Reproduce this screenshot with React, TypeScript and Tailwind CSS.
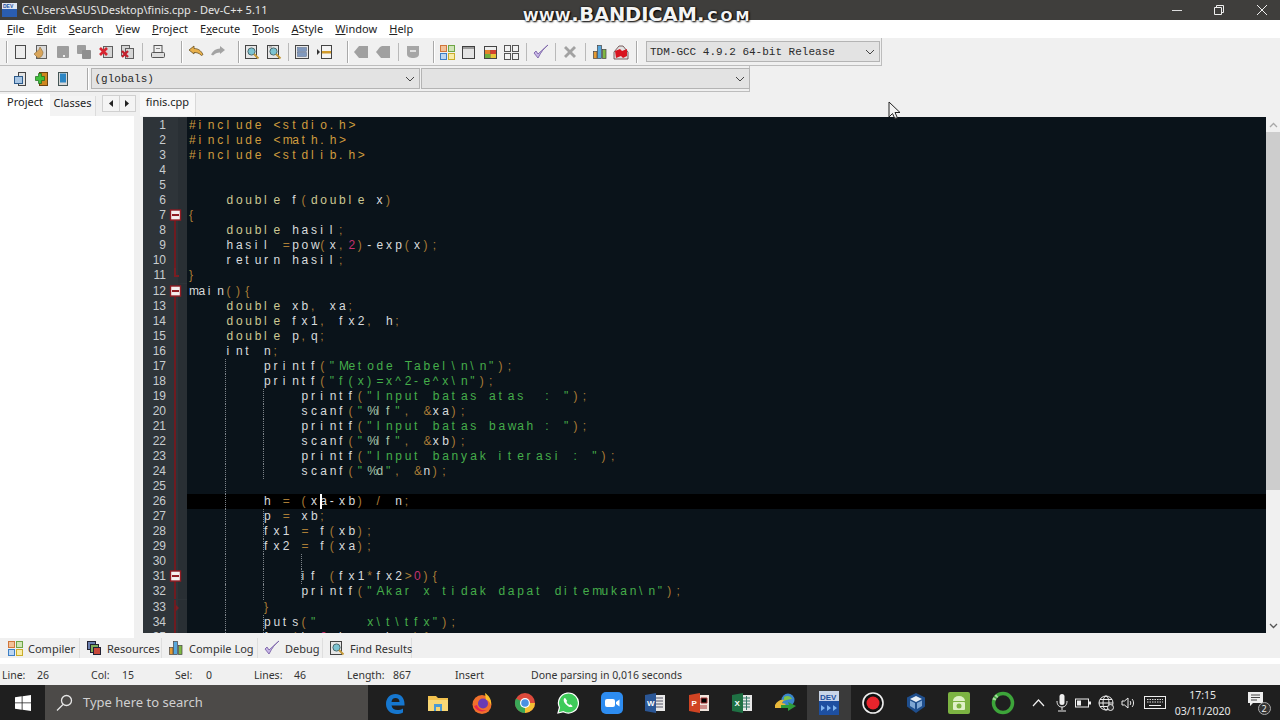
import React from "react";

const LINES: string[] = [
  "#include <stdio.h>",
  "#include <math.h>",
  "#include <stdlib.h>",
  "",
  "",
  "    double f(double x)",
  "{",
  "    double hasil;",
  "    hasil =pow(x,2)-exp(x);",
  "    return hasil;",
  "}",
  "main(){",
  "    double xb, xa;",
  "    double fx1, fx2, h;",
  "    double p,q;",
  "    int n;",
  '        printf("Metode Tabel\\n\\n");',
  '        printf("f(x)=x^2-e^x\\n");',
  '            printf("Input batas atas  : ");',
  '            scanf("%lf", &xa);',
  '            printf("Input batas bawah : ");',
  '            scanf("%lf", &xb);',
  '            printf("Input banyak iterasi : ");',
  '            scanf("%d", &n);',
  "",
  "        h = (xa-xb) / n;",
  "        p = xb;",
  "        fx1 = f(xb);",
  "        fx2 = f(xa);",
  "",
  "            if (fx1*fx2>0){",
  '            printf("Akar x tidak dapat ditemukan\\n");',
  "        }",
  '        puts("     x\\t\\tfx");',
  "        for(i=0;i<=n;i++){",
];

type Kind = "pre" | "kw" | "id" | "sym" | "str" | "fmt" | "num";
const COLOR: Record<Kind, string> = {
  pre: "text-[#d09c3e]",
  kw: "text-[#cdc892]",
  id: "text-[#d8dbdd]",
  sym: "text-[#a97c36]",
  str: "text-[#45ad4a]",
  fmt: "text-[#a9c6ad]",
  num: "text-[#c4316f]",
};

function tokens(line: string): [string, Kind][] {
  if (line.startsWith("#")) return [[line, "pre"]];
  const out: [string, Kind][] = [];
  const re = /("[^"]*")|([A-Za-z_][A-Za-z_0-9]*)|(\d+)|(\s+)|([^\s])/g;
  let m: RegExpExecArray | null;
  while ((m = re.exec(line))) {
    if (m[1]) {
      const parts = m[1].split(/(%l?[fd])/);
      parts.forEach((p) => p && out.push([p, /^%/.test(p) ? "fmt" : "str"]));
    } else if (m[2]) out.push([m[2], m[2] === "double" ? "kw" : "id"]);
    else if (m[3]) out.push([m[3], "num"]);
    else if (m[4]) out.push([m[4], "id"]);
    else out.push([m[5], m[5] === "-" ? "id" : "sym"]);
  }
  return out;
}

function Fold({ n }: { n: number }) {
  const isBox = n === 7 || n === 12 || n === 31;
  const inLine = (n > 7 && n < 11) || n > 12;
  return (
    <svg width="21" height="15.06" viewBox="0 0 21 15" className="shrink-0 block" preserveAspectRatio="none">
      <rect x="12" y="0" width="9" height="15" fill="#292f34" />
      {(inLine || n === 7 || n === 12) && <rect x="8" y={n === 7 || n === 12 ? 8 : 0} width="2" height={n === 7 || n === 12 ? 7 : 15} fill="#6e1b20" />}
      {n === 11 && <path d="M9 0V8H13" stroke="#7a1d22" strokeWidth="2" fill="none" />}
      {n === 33 && <path d="M10 5l3 3-3 3z" fill="#7a1d22" />}
      {isBox && (
        <>
          <rect x="4.5" y="2" width="10" height="10" fill="#f4efef" stroke="#8f1b22" strokeWidth="1.4" />
          <rect x="6" y="6" width="7" height="2" fill="#8f1b22" />
        </>
      )}
    </svg>
  );
}

const GUIDES: Record<number, number[]> = {};
for (let n = 17; n <= 35; n++) GUIDES[n] = [36];
for (let n = 19; n <= 24; n++) GUIDES[n] = [36, 74];
for (const n of [27, 28, 29, 30, 31, 32, 34, 35]) GUIDES[n] = [36, 74];
GUIDES[30] = [36, 74, 112];
GUIDES[31] = [36, 74, 112];

function CodeRow({ text, n }: { text: string; n: number }) {
  const active = n === 26;
  return (
    <div className="flex h-[15.06px] shrink-0">
      <div className="w-[23px] shrink-0 bg-[#2e3439] text-right text-[12px] leading-[15px] text-[#c8cccf]">{n}</div>
      <div className="w-[21px] shrink-0 bg-[#2e3439]"><Fold n={n} /></div>
      <div className={`relative flex-1 pl-[2px] flex text-[12px] leading-[15px] ${active ? "bg-black" : ""}`}>
        {(GUIDES[n] || []).map((g) => (
          <span key={g} style={{ left: g + 2 }} className="absolute top-0 bottom-0 w-px border-l border-dotted border-[#7c8288]" />
        ))}
        {tokens(text).map(([t, k], i) => (
          <React.Fragment key={i}>
            {t.split("").map((c, j) => (
              <span key={j} className={`inline-block w-[9.38px] shrink-0 whitespace-pre ${COLOR[k]}`}>{c}</span>
            ))}
          </React.Fragment>
        ))}
        {active && <span className="absolute left-[133px] top-0 h-[15px] w-[2px] bg-white" />}
      </div>
    </div>
  );
}

const S = ({ children, w = 16, h = 16, vb }: { children: React.ReactNode; w?: number; h?: number; vb?: string }) => (
  <svg width={w} height={h} viewBox={vb || `0 0 ${w} ${h}`} className="block shrink-0">{children}</svg>
);

const doc = <rect x="3.5" y="1.5" width="10" height="13" fill="#d9d9d9" stroke="#5f5f5f" />;
const mag = (
  <>
    <rect x="1.5" y="1.5" width="11" height="13" fill="#e6e6e6" stroke="#444" />
    <circle cx="7.5" cy="7.5" r="3.6" fill="#7cc4d2" stroke="#4b6a70" />
    <path d="M10 10l4.5 4.5" stroke="#c59a3a" strokeWidth="2" />
  </>
);
const Icons: Record<string, React.ReactNode> = {
  new: <S><rect x="3.5" y="1.5" width="10" height="13" fill="#ececec" stroke="#4a4a4a" /></S>,
  open: <S>{doc}<path d="M1 10c3-3 5-3 6-7l3 5c0 3-2 6-5 6z" fill="#d9a55a" stroke="#8a6a35" strokeWidth=".6" /></S>,
  save: <S><rect x="2" y="2" width="12" height="12" rx="1" fill="#9d9d9d" /><rect x="8" y="11" width="2" height="2" fill="#eee" /></S>,
  saveall: <S><rect x="1" y="1" width="9" height="9" rx="1" fill="#9d9d9d" /><rect x="6" y="6" width="9" height="9" rx="1" fill="#8f8f8f" /></S>,
  close: <S><rect x="5.5" y="2.5" width="9" height="11" fill="#d5d5d5" stroke="#5f5f5f" /><path d="M2 4l7 7M9 4l-7 7" stroke="#d8242f" strokeWidth="2.6" /></S>,
  closeall: <S><rect x="2.5" y="1.5" width="8" height="10" fill="#d5d5d5" stroke="#5f5f5f" /><rect x="6.5" y="4.5" width="8" height="10" fill="#d5d5d5" stroke="#5f5f5f" /><path d="M3 7l6 6M9 7l-6 6" stroke="#c4202d" strokeWidth="2.4" /></S>,
  print: <S><rect x="4" y="1.5" width="8" height="7" fill="#eee" stroke="#555" /><rect x="1.5" y="8.5" width="13" height="5" rx="1" fill="#ddd" stroke="#555" /><path d="M6 4.5h4" stroke="#888" /></S>,
  undo: <S><path d="M1 6l5-4v2.5c4 0 7 2 9 6l-1.5 1C11 9 9 8.5 6 8.5V10z" fill="#e9b04a" stroke="#6a5020" strokeWidth=".8" /></S>,
  redo: <S><path d="M15 6l-5-4v2.5c-4 0-7 2-9 6l2 1c2-2 4-3 7-3V10z" fill="#a3a3a3" /></S>,
  find: <S>{mag}</S>,
  findn: <S>{mag}<path d="M3 3h3" stroke="#888" /></S>,
  list: <S><rect x="1.5" y="1.5" width="13" height="13" fill="#e8e8e8" stroke="#444" /><rect x="3.5" y="3.5" width="9" height="4" fill="#7f98bd" stroke="#56688a" strokeWidth=".5" /><rect x="3.5" y="8.5" width="9" height="4" fill="#7f98bd" stroke="#56688a" strokeWidth=".5" /></S>,
  mark: <S><rect x="5.5" y="1.5" width="10" height="13" fill="#f4f4f4" stroke="#444" /><rect x="6" y="7" width="9" height="2.5" fill="#d09a2c" /><path d="M1 5l3 3-3 3z" fill="#333" /></S>,
  il: <S><path d="M1 8l5-6h9v12H6z" fill="#a0a0a0" /></S>,
  ir: <S><path d="M1 8l4-5 2-1h8v12H6z" fill="#a0a0a0" /></S>,
  sh: <S><path d="M2 2h12v8c0 3-3 4-6 4s-6-1-6-4z" fill="#a6a6a6" /><path d="M5 7h6" stroke="#eee" strokeWidth="1.6" /></S>,
  grid: <S><rect x="1.5" y="1.5" width="6" height="6" fill="#f2c198" stroke="#d0763a" /><rect x="9.5" y="1.5" width="6" height="6" fill="#cfe4b7" stroke="#6da544" /><rect x="1.5" y="9.5" width="6" height="6" fill="#bcd6f2" stroke="#3d7fc4" /><rect x="9.5" y="9.5" width="6" height="6" fill="#f9eca8" stroke="#c9ad2b" /></S>,
  win: <S><rect x="2.5" y="2.5" width="12" height="12" fill="#e3e3e3" stroke="#3e3e3e" /><rect x="3" y="3" width="11" height="2" fill="#9a9a9a" /></S>,
  block: <S><rect x="2" y="2" width="13" height="13" fill="#444" /><rect x="3" y="3" width="11" height="3" fill="#eee" /><rect x="3" y="6" width="5.5" height="4" fill="#e3842a" /><rect x="8.5" y="6" width="5.5" height="4" fill="#d4402f" /><rect x="3" y="10" width="5.5" height="4" fill="#6faf3d" /><rect x="8.5" y="10" width="5.5" height="4" fill="#e8c43a" /></S>,
  gray: <S><rect x="1.5" y="1.5" width="6" height="6" fill="#f2f2f2" stroke="#555" /><rect x="9.5" y="1.5" width="6" height="6" fill="#f2f2f2" stroke="#555" /><rect x="1.5" y="9.5" width="6" height="6" fill="#f2f2f2" stroke="#555" /><rect x="9.5" y="9.5" width="6" height="6" fill="#f2f2f2" stroke="#555" /></S>,
  check: <S><path d="M1 9l4 5C8 8 11 4 15 1L5 10 3 7z" fill="#c7b6e6" stroke="#7a62a8" strokeWidth=".9" /></S>,
  x: <S><path d="M2 4l2-2 4 4 4-4 2 2-4 4 4 4-2 2-4-4-4 4-2-2 4-4z" fill="#a2a2a2" /></S>,
  bars: <S><rect x="1.5" y="7.5" width="3.5" height="7" fill="#e59a32" stroke="#444" strokeWidth=".7" /><rect x="5.5" y="1.5" width="4" height="13" fill="#56a6dc" stroke="#444" strokeWidth=".7" /><rect x="10.5" y="5.5" width="3.5" height="9" fill="#7fb843" stroke="#444" strokeWidth=".7" /></S>,
  prof: <S><path d="M1 8l5-6h4l5 6v7H1z" fill="#e2e2e2" stroke="#5a3a3a" strokeWidth=".8" /><path d="M2 7l5-2 2 2 5-2v7l-4 2-2-2-5 2z" fill="#d8141f" /></S>,
  cls: <S><rect x="6.5" y="1.5" width="7" height="13" fill="#e4e4e4" stroke="#444" /><rect x="2.5" y="5.5" width="8" height="7" fill="#a9c6e4" stroke="#2d5b8c" /></S>,
  add: <S><rect x="6.5" y="1.5" width="8" height="13" fill="#d0871f" stroke="#6a4410" /><path d="M5.5 2.5v3h-3v4h3v3h3v-3h3v-4h-3v-3z" fill="#3fc03a" stroke="#1d6a1a" strokeWidth=".7" /></S>,
  blue: <S><rect x="3.5" y="1.5" width="9" height="13" fill="#d8d8d8" stroke="#455" /><rect x="5" y="2.5" width="6" height="9" fill="#2c86c4" /></S>,
};

const Btn = ({ i }: { i: string }) => <div className="w-[21.5px] h-[18px] shrink-0 flex items-center justify-center">{Icons[i]}</div>;
const Sep = ({ w = "w-[9px]" }: { w?: string }) => <div className={`${w} shrink-0 flex justify-center`}><div className="w-px h-[18px] bg-[#b9b9b9]" /></div>;
const Handle = ({ w }: { w: string }) => <div className={`${w} shrink-0 h-[22px] flex justify-center`}><div className="w-[2px] h-[22px] border-l border-[#a9a9a9] bg-white" /></div>;
const Chev = () => <svg width="10" height="6" viewBox="0 0 10 6" className="block shrink-0"><path d="M1 1l4 4 4-4" stroke="#444" fill="none" /></svg>;

const Combo = ({ w, text }: { w: string; text?: string }) => (
  <div className={`${w} h-[21px] shrink-0 bg-[#e3e3e3] border border-[#b4b4b4] flex items-center justify-between pl-[3px] pr-[4px] font-['Liberation_Mono'] text-[11px] text-[#2b2b2b]`}>
    <span className="whitespace-pre pt-[2px]">{text}</span>
    <Chev />
  </div>
);

const BottomTab = ({ icon, label, w }: { icon: React.ReactNode; label: string; w: string }) => (
  <div className={`${w} h-full shrink-0 flex items-center gap-[5px] pl-[6px] border-r border-[#dedede]`}>
    {icon}
    <span className="text-[#333] whitespace-nowrap pt-[2px]">{label}</span>
  </div>
);

const Stat = ({ a, b, w, lw }: { a: string; b: string; w: string; lw: string }) => (
  <div className={`${w} shrink-0 flex`}>
    <span className={`${lw} shrink-0`}>{a}</span>
    <span>{b}</span>
  </div>
);

const T = ({ children }: { children: React.ReactNode }) => <div className="w-[43.45px] h-full shrink-0 flex items-center justify-center">{children}</div>;

const Tb: Record<string, React.ReactNode> = {
  edge: (
    <S w={22} h={22}>
      <path d="M2 12C2 6 6 2 11.500 2c5.500 0 9 4 9 10v1.500H7.500c.5 3 3 4.500 6 4.500 2 0 4-.5 5.500-1.500v4C17 21.500 15 22 12.500 22 6.500 22 2 18 2 12zm5.500-2h8c0-2.500-1.500-4-4-4s-3.700 1.500-4 4z" fill="#1677cf" />
    </S>
  ),
  folder: (
    <S w={22} h={22}>
      <path d="M1 4h8l2 2h10v13H1z" fill="#f2c14e" /><rect x="1" y="8" width="20" height="11" fill="#f8d775" /><path d="M7 12h8v7h-2v-4H9v4H7z" fill="#4a9ad4" />
    </S>
  ),
  ff: (
    <S w={22} h={22}>
      <circle cx="11" cy="12.500" r="9.500" fill="#f0702c" /><path d="M14 1c3 2 7 6 6 12-1-3-3-5-5-5z" fill="#fcc02c" /><circle cx="12" cy="11.500" r="5" fill="#6a3bb4" /><path d="M3 14c2 5 8 7 13 4-5 1-9-1-10-5z" fill="#e8264c" />
    </S>
  ),
  chrome: (
    <S w={22} h={22}>
      <circle cx="11" cy="11" r="10" fill="#dd4a3c" /><path d="M11 11L2 6.500A10 10 0 0 0 11 21l5-9z" fill="#3aa757" /><path d="M11 11h10a10 10 0 0 1-10 10z" fill="#f5c033" /><circle cx="11" cy="11" r="5" fill="#fff" /><circle cx="11" cy="11" r="3.800" fill="#4a90e2" />
    </S>
  ),
  wa: (
    <S w={22} h={22}>
      <path d="M1 21l1.500-5.500A10 10 0 1 1 6.500 19.700z" fill="#3ecb5a" stroke="#fff" strokeWidth="1.200" /><path d="M7.500 6c-1.500 1.500-1 4 1.500 6.500s5 3.500 6.700 1.700l-2.200-2-1.200.8c-1.200-.6-2.300-1.700-2.900-2.900l.8-1.200-2-2.900z" fill="#fff" />
    </S>
  ),
  zoom: (
    <S w={22} h={22}>
      <rect x="0" y="0" width="22" height="22" rx="5" fill="#2d8cf0" /><rect x="4" y="7" width="10" height="8" rx="2" fill="#fff" /><path d="M15 10l3.500-2.500v7L15 12z" fill="#fff" />
    </S>
  ),
  word: (
    <S w={22} h={22}>
      <rect x="8" y="3" width="13" height="16" fill="#e8e8e8" /><path d="M11 6h8M11 9h8M11 12h8M11 15h8" stroke="#556" /><path d="M1 3l11-2v20L1 19z" fill="#2b5796" /><text x="3" y="14" fontSize="8" fontWeight="700" fill="#fff" fontFamily="Liberation Sans">W</text>
    </S>
  ),
  ppt: (
    <S w={22} h={22}>
      <rect x="8" y="3" width="13" height="16" fill="#f0e4dc" /><path d="M13 6h6v5h-6zM11 14h8M11 16h8" stroke="#a33" /><path d="M1 3l11-2v20L1 19z" fill="#d04423" /><text x="3.500" y="14" fontSize="8" fontWeight="700" fill="#fff" fontFamily="Liberation Sans">P</text>
    </S>
  ),
  xl: (
    <S w={22} h={22}>
      <rect x="8" y="3" width="13" height="16" fill="#e8e8e8" /><path d="M12 6h7M12 9h7M12 12h7M12 15h7M15.500 4v14" stroke="#376" /><path d="M1 3l11-2v20L1 19z" fill="#1f7144" /><text x="3.500" y="14" fontSize="8" fontWeight="700" fill="#fff" fontFamily="Liberation Sans">X</text>
    </S>
  ),
  idm: (
    <S w={24} h={22}>
      <circle cx="14" cy="8" r="6.500" fill="#3a86cc" /><path d="M10 5c3-2 7-1 8 2-3 0-6 1-8 2z" fill="#7ec24a" /><path d="M1 13c2-4 6-6 9-5l-2 3 4 1-5 4-6 0z" fill="#e8b83a" /><path d="M7 13h8l-1-3 8 4-8 5v-3H7z" fill="#2e9b3a" />
    </S>
  ),
  dev: (
    <svg width="20" height="24" viewBox="0 0 20 24" className="block shrink-0">
      <rect width="20" height="24" fill="#1d4fa0" /><rect width="20" height="10" fill="#c8d4e8" /><text x="1" y="8.500" fontSize="8" fontWeight="700" fill="#1d4fa0" fontFamily="Liberation Sans">DEV</text><path d="M2 14l4 3-4 3zM8 14l4 3-4 3zM14 14l4 3-4 3z" fill="#7fb4ee" />
    </svg>
  ),
  rec: (
    <S w={22} h={22}>
      <circle cx="11" cy="11" r="10" fill="#111" stroke="#eee" strokeWidth="1.600" /><circle cx="11" cy="11" r="6.500" fill="#e8242c" />
    </S>
  ),
  vbox: (
    <S w={22} h={22}>
      <path d="M11 1l9 4.500v9L11 21l-9-6.500v-9z" fill="#1f4e8c" /><path d="M11 4l6 3-6 3-6-3z" fill="#e6edf5" /><path d="M5 8.500l5 2.500v6l-5-3zM17 8.500l-5 2.500v6l5-3z" fill="#7ea6d4" />
    </S>
  ),
  android: (
    <S w={22} h={22}>
      <rect x="0" y="0" width="22" height="22" rx="2" fill="#7cb342" /><path d="M5 9a6 5 0 0 1 12 0z" fill="#dff0c8" /><rect x="5" y="10" width="12" height="8" rx="1" fill="#dff0c8" /><circle cx="11" cy="14" r="2.500" fill="#7cb342" />
    </S>
  ),
  ring: (
    <S w={24} h={24}>
      <circle cx="12" cy="12" r="9.500" fill="none" stroke="#3da53a" strokeWidth="3.500" /><path d="M3 9a10 10 0 0 1 4-5" stroke="#a8d8a0" strokeWidth="3.500" fill="none" strokeDasharray="2 1.500" />
    </S>
  ),
};

export default function App() {
  return (
    <div className="relative w-[1280px] h-[720px] overflow-hidden flex flex-col bg-[#f0f0f0] font-['Noto_Sans',sans-serif] text-[11px] text-[#222]">
      {/* Title bar */}
      <div className="h-[20px] shrink-0 bg-[#3f3e3c] flex items-center text-[#e6e6e6] text-[11px]">
        <div className="w-[22px] flex justify-center pl-[1px] pr-[4px]">
          <svg width="15" height="14" viewBox="0 0 15 14" className="block shrink-0"><rect width="15" height="14" fill="#2a5db0" /><rect width="15" height="6" fill="#dfe6f2" /><text x="1" y="5" fontSize="5" fontWeight="700" fill="#1d4fa0" fontFamily="Liberation Sans">DEV</text></svg>
        </div>
        <span className="flex-1">C:\Users\ASUS\Desktop\finis.cpp - Dev-C++ 5.11</span>
        <div className="flex items-center w-[131px] pr-[12px] justify-between pl-[23px]">
          <svg width="10" height="10" viewBox="0 0 10 10" className="block shrink-0"><path d="M0 5.500h10" stroke="#ddd" /></svg>
          <svg width="10" height="10" viewBox="0 0 10 10" className="block shrink-0"><path d="M2.500 2V.5h7v7H8M.5 2.500h7v7h-7z" stroke="#eee" fill="none" /></svg>
          <svg width="12" height="12" viewBox="0 0 12 12" className="block shrink-0"><path d="M1 1l10 10M11 1L1 11" stroke="#eee" /></svg>
        </div>
      </div>
      <div className="absolute left-[523px] top-[3px] flex items-baseline text-[#f4f4f4] font-['DejaVu_Sans',sans-serif] font-bold [font-variant-caps:small-caps] text-[19.500px] leading-[23px] tracking-[0.6px] [text-shadow:0_0_2px_#000,1px_1px_2px_#000]">
        <span>www.</span>
        <span className="tracking-[-0.1px]">BANDICAM</span>
        <span className="tracking-[3px]">.com</span>
      </div>

      {/* Menu */}
      <div className="h-[18px] shrink-0 bg-white flex items-center pl-[7px] pt-px gap-[12.2px] text-[#222]">
        <span><u>F</u>ile</span>
        <span><u>E</u>dit</span>
        <span><u>S</u>earch</span>
        <span><u>V</u>iew</span>
        <span><u>P</u>roject</span>
        <span>E<u>x</u>ecute</span>
        <span><u>T</u>ools</span>
        <span><u>A</u>Style</span>
        <span><u>W</u>indow</span>
        <span><u>H</u>elp</span>
      </div>

      {/* Toolbar 1 */}
      <div className="h-[28px] w-[882px] shrink-0 flex items-center pl-[5px] border-b border-r border-[#bdbdbd]">
        <Handle w="w-[4px]" />
        <Btn i="new" /><Btn i="open" /><Btn i="save" /><Btn i="saveall" /><Btn i="close" /><Btn i="closeall" />
        <Sep /><Btn i="print" />
        <div className="w-[10px] shrink-0" /><Handle w="w-[7px]" />
        <Btn i="undo" /><Btn i="redo" />
        <div className="w-[8px] shrink-0" /><Handle w="w-[5px]" />
        <Btn i="find" /><Btn i="findn" /><Sep w="w-[7px]" /><Btn i="list" /><Btn i="mark" />
        <div className="w-[11px] shrink-0" /><Handle w="w-[5px]" />
        <Btn i="il" /><Btn i="ir" /><Sep /><Btn i="sh" />
        <div className="w-[7px] shrink-0" /><Handle w="w-[5px]" />
        <Btn i="grid" /><Btn i="win" /><Btn i="block" /><Btn i="gray" /><Sep w="w-[8px]" /><Btn i="check" /><Sep w="w-[8px]" /><Btn i="x" /><Sep w="w-[8px]" /><Btn i="bars" /><Btn i="prof" />
        <Handle w="w-[10px]" />
        <div className="w-[4px] shrink-0" />
        <Combo w="w-[234px]" text="TDM-GCC 4.9.2 64-bit Release" />
      </div>

      {/* Toolbar 2 */}
      <div className="h-[26px] w-[750px] shrink-0 flex items-center pl-[9px] border-b border-r border-[#bdbdbd]">
        <Btn i="cls" /><Btn i="add" /><Btn i="blue" />
        <div className="w-[12px] shrink-0" />
        <Handle w="w-[4px]" />
        <div className="w-[1px] shrink-0" />
        <Combo w="w-[329px]" text="(globals)" />
        <div className="w-[1px] shrink-0" />
        <Combo w="w-[329px]" />
      </div>

      {/* Tabs */}
      <div className="h-[24px] shrink-0 flex items-end text-[#222]">
        <div className="w-[50px] h-[22px] shrink-0 bg-white flex items-center justify-center pb-[6px]">Project</div>
        <div className="w-[46px] h-[20px] shrink-0 bg-[#f3f3f3] border-r border-[#dcdcdc] flex items-center justify-center pb-[5px]">Classes</div>
        <div className="w-[6px] shrink-0" />
        <div className="w-[34px] h-[17px] mb-[4px] shrink-0 flex border border-[#d0d0d0] bg-[#f4f4f4]">
          <div className="flex-1 flex items-center justify-center border-r border-[#d0d0d0]"><svg width="4" height="7" viewBox="0 0 4 7" className="block"><path d="M4 0v7L0 3.500z" fill="#222" /></svg></div>
          <div className="flex-1 flex items-center justify-center"><svg width="4" height="7" viewBox="0 0 4 7" className="block"><path d="M0 0v7l4-3.500z" fill="#222" /></svg></div>
        </div>
        <div className="w-[4px] shrink-0" />
        <div className="w-[56px] h-[23px] shrink-0 bg-[#f8f8f8] border-r border-[#d8d8d8] flex items-center justify-center pb-[5px]">finis.cpp</div>
      </div>

      {/* Main */}
      <div className="h-[522px] shrink-0 flex">
        <div className="w-[134px] shrink-0 bg-white" />
        <div className="w-[9px] shrink-0" />
        <div className="flex-1 min-w-0 pt-px pb-[5px] border-0 font-['Liberation_Sans',sans-serif]">
          <div className="h-full flex">
            <div className="flex-1 min-w-0 bg-[#0a131a] overflow-hidden flex flex-col">
              <div className="h-px shrink-0 ml-0 w-[44px] bg-[#2e3439]" />
              {LINES.map((l, i) => <CodeRow key={i} text={l} n={i + 1} />)}
            </div>
            <div className="w-[14px] shrink-0 flex flex-col bg-[#f0f0f0]">
              <div className="h-[15px] shrink-0 flex items-center justify-center"><svg width="9" height="6" viewBox="0 0 9 6" className="block"><path d="M1 5l3.500-3.500L8 5" stroke="#a8a8a8" strokeWidth="1.300" fill="none" /></svg></div>
              <div className="h-[358px] shrink-0 bg-[#cdcdcd]" />
              <div className="flex-1" />
              <div className="h-[15px] shrink-0 flex items-center justify-center"><svg width="9" height="6" viewBox="0 0 9 6" className="block"><path d="M1 1l3.500 3.500L8 1" stroke="#555" strokeWidth="1.300" fill="none" /></svg></div>
            </div>
          </div>
        </div>
      </div>

      {/* Bottom tabs */}
      <div className="h-[20px] shrink-0 flex pl-[1px]">
        <BottomTab w="w-[79px]" label="Compiler" icon={<S>{Icons.grid}</S>} />
        <BottomTab w="w-[82px]" label="Resources" icon={<S><rect x="1.500" y="1.500" width="8" height="8" fill="#6a7fb0" stroke="#223" /><rect x="4.500" y="4.500" width="8" height="8" fill="#7fae5a" stroke="#223" /><rect x="7.500" y="7.500" width="7" height="7" fill="#c8483a" stroke="#223" /></S>} />
        <BottomTab w="w-[96px]" label="Compile Log" icon={<S>{Icons.bars}</S>} />
        <BottomTab w="w-[65px]" label="Debug" icon={<S>{Icons.check}</S>} />
        <BottomTab w="w-[89px]" label="Find Results" icon={<S>{Icons.find}</S>} />
      </div>
      <div className="h-[6px] shrink-0 bg-white" />

      {/* Status */}
      <div className="h-[21px] shrink-0 flex items-center pl-[2px] pt-[3px] text-[10.500px] text-[#333]">
        <Stat w="w-[89px]" lw="w-[35px]" a="Line:" b="26" />
        <Stat w="w-[84px]" lw="w-[31px]" a="Col:" b="15" />
        <Stat w="w-[79px]" lw="w-[31px]" a="Sel:" b="0" />
        <Stat w="w-[93px]" lw="w-[40px]" a="Lines:" b="46" />
        <Stat w="w-[108px]" lw="w-[46px]" a="Length:" b="867" />
        <span className="w-[76px] shrink-0">Insert</span>
        <span>Done parsing in 0,016 seconds</span>
      </div>

      {/* Taskbar */}
      <div className="h-[35px] shrink-0 bg-[#1f1f1f] flex items-center">
        <div className="w-[45px] shrink-0 flex justify-center">
          <svg width="16" height="16" viewBox="0 0 16 16" className="block"><path d="M0 2.300l6.700-1V7.500H0zM7.500 1.200L16 0v7.500H7.500zM0 8.300h6.700v6.400l-6.700-1zM7.500 8.300H16V16l-8.500-1.200z" fill="#fff" /></svg>
        </div>
        <div className="w-[323px] h-full shrink-0 bg-[#4c4a48] flex items-center pl-[11px] gap-[10px] text-[13px] text-[#d0d0d0]">
          <svg width="17" height="17" viewBox="0 0 17 17" className="block shrink-0"><circle cx="10.500" cy="6.500" r="5" fill="none" stroke="#e6e6e6" strokeWidth="1.300" /><path d="M7 10.500l-6 6" stroke="#e6e6e6" strokeWidth="1.300" /></svg>
          <span>Type here to search</span>
        </div>
        <div className="w-[5px] shrink-0" />
        <T>{Tb.edge}</T><T>{Tb.folder}</T><T>{Tb.ff}</T><T>{Tb.chrome}</T><T>{Tb.wa}</T><T>{Tb.zoom}</T><T>{Tb.word}</T><T>{Tb.ppt}</T><T>{Tb.xl}</T><T>{Tb.idm}</T>
        <div className="w-[43.45px] h-full shrink-0 flex items-center justify-center bg-[#3a3a3a]">{Tb.dev}</div>
        <T>{Tb.rec}</T><T>{Tb.vbox}</T><T>{Tb.android}</T><T>{Tb.ring}</T>
        <div className="w-[7px] shrink-0" />
        <div className="flex items-center gap-[7px] shrink-0">
          <svg width="13" height="8" viewBox="0 0 13 8" className="block shrink-0"><path d="M1 7l5.500-6L12 7" stroke="#eee" strokeWidth="1.200" fill="none" /></svg>
          <svg width="12" height="18" viewBox="0 0 12 18" className="block shrink-0 ml-[4px]"><rect x="3.500" y="0" width="5" height="11" rx="2.500" fill="#eee" /><path d="M1 7c0 4 2 6 5 6s5-2 5-6M6 13v3M2 17h8" stroke="#eee" fill="none" /></svg>
          <svg width="16" height="10" viewBox="0 0 16 10" className="block shrink-0"><rect x=".5" y="1" width="13" height="8" fill="none" stroke="#eee" /><rect x="2" y="2.500" width="4" height="5" fill="#eee" /><rect x="14" y="3.500" width="2" height="3" fill="#eee" /></svg>
          <svg width="16" height="16" viewBox="0 0 16 16" className="block shrink-0"><circle cx="8" cy="8" r="7" fill="none" stroke="#eee" /><ellipse cx="8" cy="8" rx="3" ry="7" fill="none" stroke="#eee" /><path d="M1 8h14M2 4.500h12M2 11.500h12" stroke="#eee" /><circle cx="12.500" cy="12.500" r="3" fill="#333" stroke="#eee" /></svg>
          <svg width="15" height="14" viewBox="0 0 15 14" className="block shrink-0"><path d="M1 5h2.500L7 2v10L3.500 9H1z" fill="none" stroke="#eee" /><path d="M9 5c1 1 1 3 0 4M11 3c2 2 2 6 0 8" stroke="#eee" fill="none" /></svg>
          <svg width="22" height="13" viewBox="0 0 22 13" className="block shrink-0 ml-[1px]"><rect x=".5" y=".5" width="21" height="12" fill="none" stroke="#eee" /><path d="M3 3.500h16M3 6h16" stroke="#ddd" strokeDasharray="1.500 1" /><path d="M5 9.500h12" stroke="#eee" /></svg>
        </div>
        <div className="w-[62px] shrink-0 ml-[6px] text-center text-[#e8e8e8] text-[10.500px] leading-[16px]">
          <div>17:15</div>
          <div>03/11/2020</div>
        </div>
        <div className="relative w-[20px] h-[24px] shrink-0 ml-[13px]">
          <svg width="18" height="16" viewBox="0 0 18 16" className="block"><path d="M1 1h15v11H6l-3 3v-3H1z" fill="#eee" /><path d="M4 4h9M4 6.500h9M4 9h6" stroke="#444" /></svg>
          <div className="absolute -right-[4px] bottom-0 w-[13px] h-[13px] rounded-full bg-[#333] border border-[#aaa] flex items-center justify-center text-[9px] leading-none text-[#eee]">2</div>
        </div>
      </div>

      {/* Mouse cursor */}
      <svg width="14" height="20" viewBox="0 0 14 20" className="absolute left-[888px] top-[101px]">
        <path d="M1 1v15l3.500-3.500L7 18l2.500-1L7 11.500h5z" fill="#f4f4f4" fillOpacity=".6" stroke="#222" />
      </svg>
    </div>
  );
}
